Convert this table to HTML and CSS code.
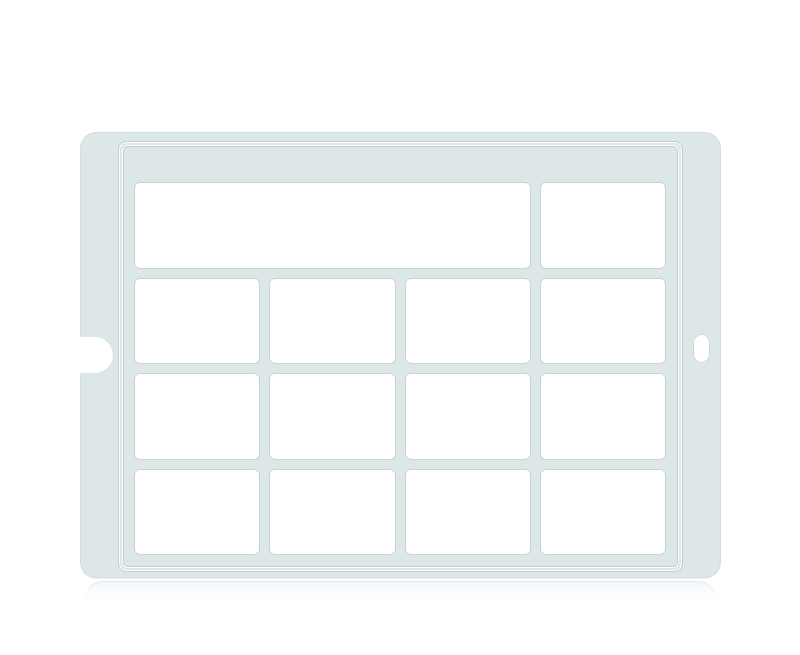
FILE: index.html
```html
<!DOCTYPE html>
<html lang="en">
<head>
<meta charset="utf-8">
<title>Keyguard</title>
<link rel="stylesheet" href="styles.css">
</head>
<body>
<div class="stage">
  <div class="device">
    <div class="notch"></div>
    <div class="pill"></div>
    <div class="bezel">
      <div class="grid">
        <div class="cell wide"></div>
        <div class="cell"></div>
        <div class="cell"></div>
        <div class="cell"></div>
        <div class="cell"></div>
        <div class="cell"></div>
        <div class="cell"></div>
        <div class="cell"></div>
        <div class="cell"></div>
        <div class="cell"></div>
        <div class="cell"></div>
        <div class="cell"></div>
        <div class="cell"></div>
        <div class="cell"></div>
      </div>
    </div>
  </div>
</div>
</body>
</html>
```

FILE: styles.css
```css
html, body {
  margin: 0;
  padding: 0;
  background: #ffffff;
  font-family: "Liberation Sans", Arial, sans-serif;
}

.stage {
  width: 800px;
  height: 655px;
  padding: 132px 0 0 80px;
  box-sizing: border-box;
}

.device {
  position: relative;
  width: 641px;
  height: 446px;
  box-sizing: border-box;
  background: #dee7e7;
  border-radius: 16px;
  border: 1px solid #d3dddd;
  padding: 8px 37px 5px 37px;
  box-shadow: 0 1px 0 #eef2f2;
}

.device::after {
  content: "";
  position: absolute;
  left: 4px;
  right: 4px;
  top: 448px;
  height: 22px;
  border-radius: 18px 18px 0 0;
  border-top: 1px solid rgba(225, 230, 234, 0.9);
  background: linear-gradient(to bottom, rgba(232, 237, 241, 0.5), rgba(248, 250, 252, 0.2) 60%, rgba(255, 255, 255, 0));
}

.notch {
  position: absolute;
  left: -1px;
  top: 204px;
  width: 34px;
  height: 36px;
  background: #ffffff;
  border-radius: 0 18px 18px 0;
  box-shadow: inset -1px 0 0 #cdd7d7;
}

.pill {
  position: absolute;
  left: 612px;
  top: 201px;
  width: 17px;
  height: 29px;
  background: #ffffff;
  border-radius: 9px;
  box-shadow: inset 0 0 0 1px #cdd7d7;
}

.bezel {
  position: relative;
  height: 100%;
  box-sizing: border-box;
  border: 1px solid #c3cdcd;
  border-radius: 8px;
  box-shadow: inset 0 0 0 1px #ffffff;
  padding: 41px 17px 17px 16px;
}

.bezel::before {
  content: "";
  position: absolute;
  inset: 4px;
  border: 1px solid #c3cdcd;
  border-radius: 5px;
  box-shadow: 0 0 0 1px #ffffff;
  pointer-events: none;
}

.grid {
  position: relative;
  height: 100%;
  display: grid;
  grid-template-columns: repeat(4, 1fr);
  grid-template-rows: repeat(4, 1fr);
  gap: 11px;
}

.cell {
  background: #ffffff;
  border-radius: 5px;
  box-shadow: 0 0 0 1px #c9d3d3;
}

.cell.wide {
  grid-column: span 3;
}
```
